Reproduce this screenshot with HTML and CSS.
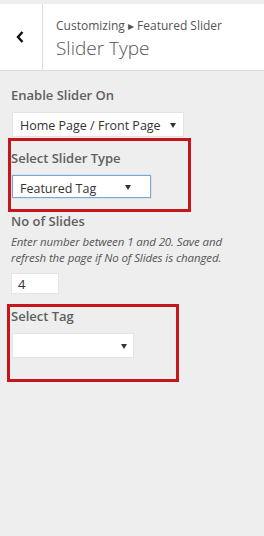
FILE: index.html
```html
<!DOCTYPE html>
<html lang="en">
<head>
    <meta charset="UTF-8">
    <meta name="viewport" content="width=device-width, initial-scale=1.0">
    <title>Slider Type</title>
    <link rel="stylesheet" href="styles.css">
</head>
<body>
    <div class="header">
        <button class="back" aria-label="Back">
            <svg width="8" height="12" viewBox="0 0 8 12"><path d="M6.5 1 L2 6 L6.5 11" fill="none" stroke="#111" stroke-width="2.4"/></svg>
        </button>
        <div class="title">
            <span class="crumb">Customizing &#9656; Featured Slider</span>
            <h2>Slider Type</h2>
        </div>
    </div>
    <div class="panel">
        <label class="field-label">Enable Slider On</label>
        <div class="select-wrap wide">
            <select><option>Home Page / Front Page</option></select>
        </div>

        <div class="highlight first">
            <label class="field-label">Select Slider Type</label>
            <div class="select-wrap mid focused">
                <select><option>Featured Tag</option></select>
            </div>
        </div>

        <label class="field-label slides">No of Slides</label>
        <p class="desc">Enter number between 1 and 20. Save and refresh the page if No of Slides is changed.</p>
        <input class="num" type="text" value="4">

        <div class="highlight second">
            <label class="field-label">Select Tag</label>
            <div class="select-wrap narrow">
                <select><option></option></select>
            </div>
        </div>
    </div>
</body>
</html>
```

FILE: styles.css
```css
body {
    margin: 0;
    background: #eeeeee;
    font-family: "Open Sans", "Noto Sans", sans-serif;
    color: #555555;
    height: 536px;
    overflow: hidden;
}
.header {
    display: flex;
    margin-top: 4px;
    height: 66px;
    background: #ffffff;
    border-bottom: 1px solid #dddddd;
}
.back {
    width: 43px;
    border: none;
    border-right: 1px solid #dddddd;
    background: #ffffff;
    display: flex;
    align-items: center;
    justify-content: center;
    padding: 0 2px 0 0;
}
.title {
    padding: 14px 0 0 13px;
}
.crumb {
    display: block;
    font-size: 12px;
    line-height: 16px;
    color: #555555;
}
.title h2 {
    margin: 2px 0 0;
    font-size: 19px;
    line-height: 24px;
    font-weight: 300;
    color: #555555;
}
.panel {
    padding: 15px 0 0 11px;
}
.field-label {
    display: block;
    font-size: 13px;
    font-weight: 600;
    line-height: 18px;
    color: #5f5f5f;
}
.select-wrap {
    position: relative;
    margin: 8px 0 0 1px;
    height: 25px;
    background: #ffffff;
    border: 1px solid #e4e4e4;
    box-sizing: border-box;
}
.select-wrap select {
    appearance: none;
    -webkit-appearance: none;
    width: 100%;
    height: 100%;
    border: none;
    background: transparent;
    font-family: inherit;
    font-size: 12.5px;
    color: #333333;
    padding: 0 0 0 7px;
}
.select-wrap::after {
    content: "";
    position: absolute;
    right: 7px;
    top: 10px;
    border-left: 3px solid transparent;
    border-right: 3px solid transparent;
    border-top: 5px solid #333333;
}
.wide {
    width: 172px;
}
.mid {
    width: 139px;
    height: 23px;
}
.mid::after {
    top: 9px;
    right: 19px;
}
.narrow {
    width: 122px;
}
.narrow::after {
    right: 6px;
}
.focused {
    border-color: #7aa8d6;
    box-shadow: 0 0 1px #7aa8d6;
}
.highlight {
    border: 3px solid #c4161c;
    box-sizing: border-box;
}
.first {
    width: 183px;
    height: 74px;
    margin: 1px 0 0 -3px;
    padding: 8px 0 0 0;
}
.first .select-wrap {
    margin: 8px 0 0 1px;
}
.slides {
    margin-top: 0;
}
.desc {
    margin: 4px 0 0;
    width: 234px;
    font-size: 11.5px;
    font-style: italic;
    letter-spacing: -0.1px;
    line-height: 16px;
    color: #555555;
}
.num {
    display: block;
    margin: 7px 0 0;
    width: 48px;
    height: 21px;
    box-sizing: border-box;
    border: 1px solid #e4e4e4;
    font-family: inherit;
    font-size: 13px;
    color: #333333;
    padding: 0 0 0 6px;
}
.second {
    width: 172px;
    height: 78px;
    margin: 10px 0 0 -4px;
    padding: 0 0 0 1px;
}
.second .field-label {
    margin-top: 0;
}
.second .select-wrap {
    margin-top: 8px;
}
```
